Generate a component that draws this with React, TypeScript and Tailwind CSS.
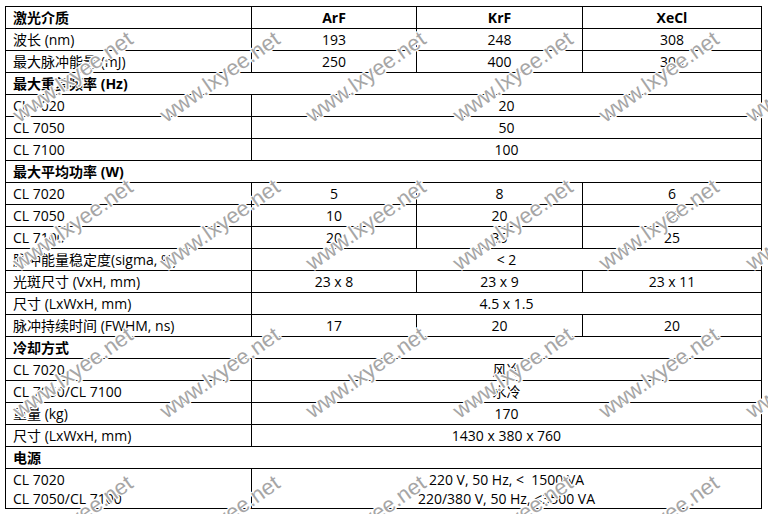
type Row =
  | { kind: "head"; label: string; cells: string[] }
  | { kind: "section"; label: string }
  | { kind: "three"; label: string; cells: string[] }
  | { kind: "span"; label: string; value: string };

const ROWS: Row[] = [
  { kind: "head", label: "激光介质", cells: ["ArF", "KrF", "XeCl"] },
  { kind: "three", label: "波长 (nm)", cells: ["193", "248", "308"] },
  { kind: "three", label: "最大脉冲能量 (mJ)", cells: ["250", "400", "300"] },
  { kind: "section", label: "最大重复频率 (Hz)" },
  { kind: "span", label: "CL 7020", value: "20" },
  { kind: "span", label: "CL 7050", value: "50" },
  { kind: "span", label: "CL 7100", value: "100" },
  { kind: "section", label: "最大平均功率 (W)" },
  { kind: "three", label: "CL 7020", cells: ["5", "8", "6"] },
  { kind: "three", label: "CL 7050", cells: ["10", "20", "15"] },
  { kind: "three", label: "CL 7100", cells: ["20", "35", "25"] },
  { kind: "span", label: "脉冲能量稳定度(sigma, %)", value: "< 2" },
  { kind: "three", label: "光斑尺寸 (VxH, mm)", cells: ["23 x 8", "23 x 9", "23 x 11"] },
  { kind: "span", label: "尺寸 (LxWxH, mm)", value: "4.5 x 1.5" },
  { kind: "three", label: "脉冲持续时间 (FWHM, ns)", cells: ["17", "20", "20"] },
  { kind: "section", label: "冷却方式" },
  { kind: "span", label: "CL 7020", value: "风冷" },
  { kind: "span", label: "CL 7050/CL 7100", value: "水冷" },
  { kind: "span", label: "重量 (kg)", value: "170" },
  { kind: "span", label: "尺寸 (LxWxH, mm)", value: "1430 x 380 x 760" },
  { kind: "section", label: "电源" },
];

const cell = "border border-black h-[22px] p-0 leading-[20px] whitespace-nowrap";

// watermark grid: centres every ~146px across, ~148px down
const MARKS: { x: number; y: number }[] = [];
for (let j = 0; j < 4; j++) {
  for (let k = -1; k < 6; k++) {
    MARKS.push({ x: 73 + 146.5 * k, y: 77 + 148 * j });
  }
}

function SpecRow({ row }: { row: Row }) {
  if (row.kind === "section") {
    return (
      <tr>
        <td colSpan={4} className={`${cell} pl-[7px] font-bold`}>
          {row.label}
        </td>
      </tr>
    );
  }
  if (row.kind === "span") {
    return (
      <tr>
        <td className={`${cell} pl-[7px]`}>{row.label}</td>
        <td colSpan={3} className={`${cell} text-center`}>
          {row.value}
        </td>
      </tr>
    );
  }
  const bold = row.kind === "head" ? "font-bold" : "";
  return (
    <tr>
      <td className={`${cell} pl-[7px] ${bold}`}>{row.label}</td>
      {row.cells.map((c, i) => (
        <td key={i} className={`${cell} text-center ${bold}`}>
          {c}
        </td>
      ))}
    </tr>
  );
}

export default function App() {
  return (
    <div
      className="relative w-[768px] h-[514px] overflow-hidden bg-white text-black text-[14px]"
      style={{ fontFamily: '"Open Sans", "Noto Sans CJK SC", sans-serif' }}
    >
      <table className="border-collapse table-fixed w-[756px] ml-[5px] mt-[6px]">
        <colgroup>
          <col className="w-[246px]" />
          <col className="w-[165px]" />
          <col className="w-[166px]" />
          <col className="w-[179px]" />
        </colgroup>
        <tbody>
          {ROWS.map((r, i) => (
            <SpecRow key={i} row={r} />
          ))}
          <tr>
            <td className="border border-black p-0 pl-[7px] leading-[19px] h-[40px]">
              CL 7020
              <br />
              CL 7050/CL 7100
            </td>
            <td colSpan={3} className="border border-black p-0 leading-[19px] text-center whitespace-pre">
              {"220 V, 50 Hz, <  1500 VA"}
              <br />
              {"220/380 V, 50 Hz, <3500 VA"}
            </td>
          </tr>
        </tbody>
      </table>

      {/* watermark overlay */}
      <div className="pointer-events-none absolute inset-0">
        {MARKS.map((m, i) => (
          <span
            key={i}
            className="absolute whitespace-nowrap text-[22px] leading-none text-[#a6a6a6] -translate-x-1/2 -translate-y-1/2 -rotate-[35deg] [text-shadow:1px_0_0_#fff,-1px_0_0_#fff,0_1px_0_#fff,0_-1px_0_#fff,1px_1px_0_#fff,-1px_-1px_0_#fff,1px_-1px_0_#fff,-1px_1px_0_#fff,0_0_2px_#fff]"
            style={{ left: m.x, top: m.y, fontFamily: '"Liberation Sans", sans-serif' }}
          >
            www.lxyee.net
          </span>
        ))}
      </div>
    </div>
  );
}
